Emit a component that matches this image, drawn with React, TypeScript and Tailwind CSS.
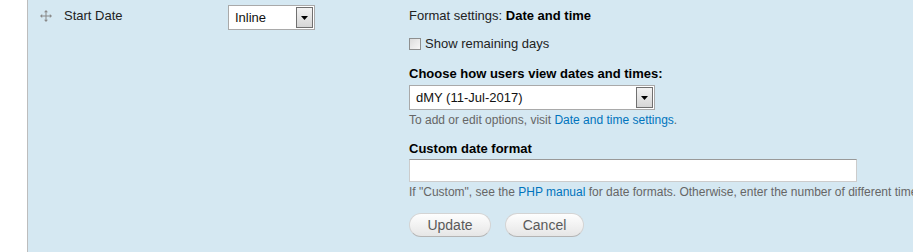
import React from "react";

const MoveIcon: React.FC = () => (
  <svg width="12" height="12" viewBox="0 0 12 12" className="shrink-0">
    <g fill="#8a8a8a">
      <rect x="5.5" y="1" width="1" height="10" />
      <rect x="1" y="5.5" width="10" height="1" />
      <path d="M6 0 L8 2.2 L4 2.2 Z" />
      <path d="M6 12 L8 9.8 L4 9.8 Z" />
      <path d="M0 6 L2.2 4 L2.2 8 Z" />
      <path d="M12 6 L9.8 4 L9.8 8 Z" />
    </g>
  </svg>
);

const FakeSelect: React.FC<{ value: string; width: string }> = ({ value, width }) => (
  <div
    className={`${width} h-[25px] flex items-stretch border border-[#a9a9a9] bg-white`}
  >
    <span className="flex-1 flex items-center pl-[6px] text-[13px] text-[#111]">{value}</span>
    <span className="w-[17px] my-[1px] mr-[1px] flex items-center justify-center border border-[#707070] bg-gradient-to-b from-[#f2f2f2] to-[#d6d6d6]">
      <svg width="7" height="4" viewBox="0 0 7 4">
        <path d="M0 0 H7 L3.5 4 Z" fill="#000" />
      </svg>
    </span>
  </div>
);

const Btn: React.FC<{ label: string; width: string }> = ({ label, width }) => (
  <button
    className={`${width} h-[24px] rounded-full border border-[#d4d4d4] border-b-[#b4b4b4] bg-gradient-to-b from-[#fefefe] to-[#e6e6e6] text-[14px] leading-none text-[#5a5a5a] flex items-center justify-center`}
  >
    {label}
  </button>
);

export default function App() {
  return (
    <div
      className="w-[913px] h-[252px] flex bg-white overflow-hidden"
      style={{ fontFamily: '"Liberation Sans", Arial, sans-serif' }}
    >
      {/* white gutter */}
      <div className="w-[27px] shrink-0 bg-white" />

      {/* editing row */}
      <div className="flex-1 flex border-l border-[#bdbdbd] bg-[#d5e8f2]">
        {/* drag handle + label */}
        <div className="w-[200px] shrink-0 flex items-start pl-[12px] pt-[9px] gap-[12px]">
          <span className="mt-[1px]">
            <MoveIcon />
          </span>
          <span className="text-[13px] leading-[18px] text-[#222] -mt-[2px]">Start Date</span>
        </div>

        {/* formatter select */}
        <div className="w-[181px] shrink-0 pt-[5px]">
          <FakeSelect value="Inline" width="w-[87px]" />
        </div>

        {/* settings */}
        <div className="flex-1 flex flex-col pt-[7px] text-[13px] leading-[18px] text-[#222]">
          <div>
            Format settings: <strong className="font-bold text-black">Date and time</strong>
          </div>

          <label className="mt-[10px] flex items-center gap-[4px]">
            <span className="w-[12px] h-[12px] border border-[#8e8f8f] bg-gradient-to-br from-[#dcdcdc] to-[#f8f8f8]" />
            <span>Show remaining days</span>
          </label>

          <div className="mt-[12px] font-bold text-black">Choose how users view dates and times:</div>
          <div className="mt-[2px]">
            <FakeSelect value="dMY (11-Jul-2017)" width="w-[246px]" />
          </div>
          <div className="mt-[2px] text-[12px] leading-[16px] text-[#666]">
            To add or edit options, visit <a className="text-[#0074bd]">Date and time settings</a>.
          </div>

          <div className="mt-[12px] font-bold text-black">Custom date format</div>
          <div className="mt-[1px] w-[448px] h-[23px] bg-white border border-[#ccc] border-t-[#999]" />
          <div className="mt-[2px] text-[12px] leading-[16px] text-[#666] whitespace-nowrap">
            If "Custom", see the <a className="text-[#0074bd]">PHP manual</a> for date formats. Otherwise, enter the number of different time units to display, which defaults to 2.
          </div>

          <div className="mt-[13px] flex gap-[14px]">
            <Btn label="Update" width="w-[82px]" />
            <Btn label="Cancel" width="w-[79px]" />
          </div>
        </div>
      </div>
    </div>
  );
}
